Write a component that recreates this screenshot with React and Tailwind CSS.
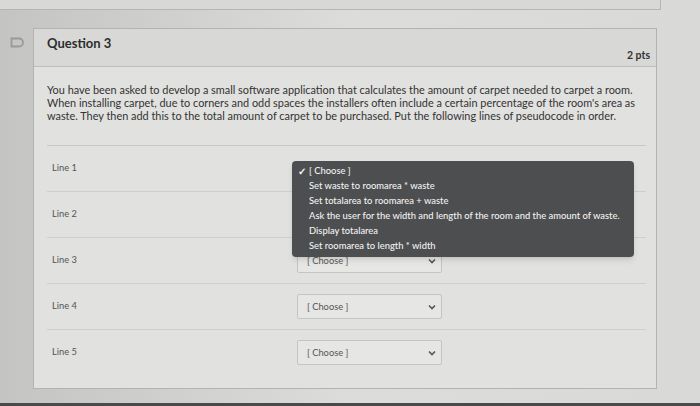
import React from "react";

const options = [
  "Set waste to roomarea * waste",
  "Set totalarea to roomarea + waste",
  "Ask the user for the width and length of the room and the amount of waste.",
  "Display totalarea",
  "Set roomarea to length * width",
];

function Chevron() {
  return (
    <svg width="8" height="6" viewBox="0 0 8 6" className="shrink-0">
      <path d="M1 1.5 L4 4.5 L7 1.5" fill="none" stroke="#555" strokeWidth="1.6" />
    </svg>
  );
}

function Select({ hidden }) {
  return (
    <div className={`w-[145px] h-[25px] border border-[#c4c4c2] bg-[#e6e6e4] rounded-[2px] flex items-center justify-between pl-[9px] pr-[5px] ${hidden ? "invisible" : ""}`}>
      <span className="text-[9.3px] text-[#555]">[ Choose ]</span>
      <Chevron />
    </div>
  );
}

function Row({ label, last, hidden, children }) {
  return (
    <div className={`relative flex items-center pt-[10px] pb-[10px] ${last ? "" : "border-b border-[#cfcfcd]"}`}>
      <div className="w-[250px] pl-[5px] pb-[2px] text-[9.3px] text-[#555]">{label}</div>
      <Select hidden={hidden} />
      {children}
    </div>
  );
}

export default function App() {
  return (
    <div
      className="w-[700px] h-[406px] overflow-hidden flex flex-col bg-gradient-to-r from-[#c4c4c2] via-[#dcdcda] to-[#d9d9d7]"
      style={{ fontFamily: "Lato, 'Open Sans', sans-serif" }}
    >
      <div className="h-[10px] w-[661px] border-b border-r border-[#b5b5b3] bg-[#d8d8d6] shrink-0" />
      <div className="flex mt-[18px] flex-1">
        <div className="w-[33px] shrink-0 pl-[10px] pt-[9px]">
          <svg width="15" height="11" viewBox="0 0 15 11">
            <path d="M1.5 1.5 H9 A4 4 0 0 1 9 9.5 H1.5 Z" fill="none" stroke="#9a9a98" strokeWidth="1.8" />
          </svg>
        </div>
        <div className="w-[624px] h-[361px] border border-[#b3b3b1] bg-[#e1e1df] flex flex-col">
          <div className="h-[38px] shrink-0 bg-[#d8d8d6] border-b border-[#bdbdbb] flex justify-between pl-[13px] pr-[6px]">
            <div className="text-[13px] font-bold text-[#2d2d2d] pt-[5px]">Question 3</div>
            <div className="text-[10.5px] font-bold text-[#333] pt-[19px]">2 pts</div>
          </div>
          <div className="pl-[13px] pr-[10px] pt-[16px]">
            <div className="border-b border-[#c8c8c6] pb-[23px]">
              <p className="w-[596px] text-[10.9px] leading-[13px] text-[#333]">
                You have been asked to develop a small software application that calculates the amount of carpet needed to carpet a room. When installing carpet, due to corners and odd spaces the installers often include a certain percentage of the room's area as waste. They then add this to the total amount of carpet to be purchased. Put the following lines of pseudocode in order.
              </p>
            </div>
            <div>
              <Row label="Line 1" hidden>
                <div className="absolute left-[245px] top-[15px] w-[342px] h-[96px] rounded-[4px] bg-[#4d4e50] shadow-md z-10 pt-[3px] text-[9.4px] text-[#f2f2f2] font-medium">
                  <div className="h-[15px] flex items-center pl-[6px]">
                    <span className="w-[11px] text-[10px] font-bold">✓</span>
                    <span>[ Choose ]</span>
                  </div>
                  {options.map((o) => (
                    <div key={o} className="h-[15px] flex items-center pl-[17px] whitespace-nowrap">
                      {o}
                    </div>
                  ))}
                </div>
              </Row>
              <Row label="Line 2" hidden />
              <Row label="Line 3" />
              <Row label="Line 4" />
              <Row label="Line 5" last />
            </div>
          </div>
        </div>
      </div>
      <div className="h-[3px] bg-[#4a4a4a] shrink-0" />
    </div>
  );
}
